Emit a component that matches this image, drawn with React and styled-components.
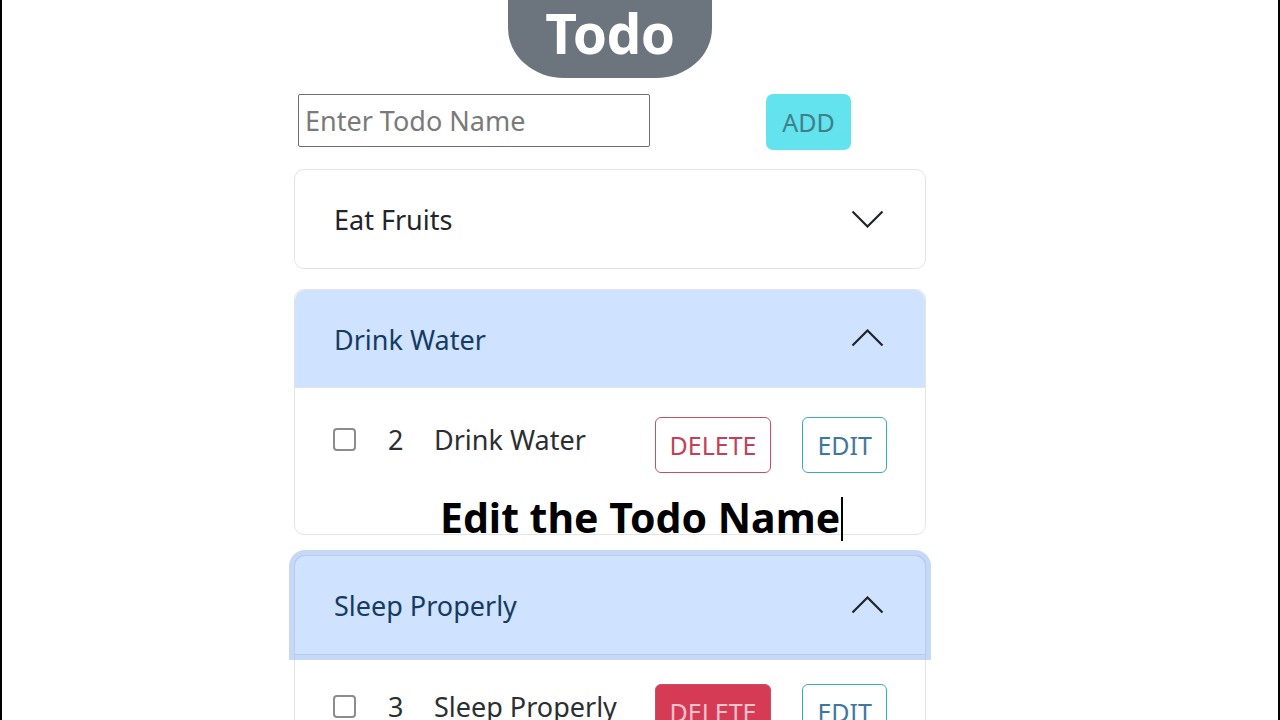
import React from "react";
import styled, { createGlobalStyle } from "styled-components";

const GlobalStyle = createGlobalStyle`
  html, body {
    margin: 0;
    padding: 0;
    background: #ffffff;
  }
  body {
    font-family: "Noto Sans", "Open Sans", sans-serif;
  }
`;

const Page = styled.div`
  position: relative;
  height: 720px;
  overflow: hidden;
  box-sizing: border-box;
  border-left: 2px solid #000;
  border-right: 2px solid #000;
  background: #fff;
`;

const Column = styled.div`
  width: 632px;
  margin-left: 292px;
  display: flex;
  flex-direction: column;
`;

const TitlePill = styled.h1`
  align-self: center;
  margin: -20px 0 0;
  padding: 20px 37px 12px;
  background: #6c757d;
  color: #fff;
  font-size: 55px;
  font-weight: 700;
  line-height: 1.2;
  border-radius: 0 0 56px 56px / 0 0 50px 50px;
  letter-spacing: -0.5px;
`;

const AddRow = styled.div`
  display: flex;
  align-items: flex-start;
  gap: 116px;
  margin: 16px 0 19px 4px;
`;

const NameInput = styled.input`
  width: 352px;
  height: 53px;
  box-sizing: border-box;
  border: 1px solid #6f6f6f;
  border-radius: 2px;
  padding: 0 6px;
  font-family: inherit;
  font-size: 27px;
  color: #212529;
  outline: none;

  &::placeholder {
    color: #7a7a7a;
  }
`;

const AddButton = styled.button`
  width: 85px;
  height: 56px;
  border: none;
  border-radius: 7px;
  background: #63e3ee;
  color: #3f7f8a;
  font-family: inherit;
  font-size: 25px;
  cursor: pointer;
`;

const Item = styled.div`
  border: 1px solid #e1e4e8;
  border-radius: 10px;
  margin-bottom: 20px;
  background: #fff;
`;

const Header = styled.div`
  display: flex;
  align-items: center;
  justify-content: space-between;
  padding: 30px 41px 27px 39px;
  font-size: 27px;
  line-height: 1.5;
  color: ${(p) => (p.$open ? "#163b62" : "#212529")};
  background: ${(p) => (p.$open ? "#cfe2ff" : "#fff")};
  border-radius: ${(p) => (p.$open ? "10px 10px 0 0" : "10px")};
  box-shadow: ${(p) =>
    p.$focus ? "0 0 0 1px #b9cdea, 0 0 0 6px rgba(150, 185, 240, 0.55)" : "none"};
  position: relative;
  z-index: 1;
`;

const Chevron = styled.svg`
  width: 33px;
  height: 18px;
  flex: none;
  margin-top: -3px;
`;

const Body = styled.div`
  padding: 30px 38px 61px 38px;
  border-top: 1px solid #e1e4e8;
`;

const Row = styled.div`
  display: flex;
  align-items: flex-start;
  font-size: 27px;
  line-height: 1.5;
  color: #2b2f33;
`;

const Check = styled.span`
  width: 23px;
  height: 23px;
  box-sizing: border-box;
  border: 2px solid #8c8c8c;
  border-radius: 4px;
  margin-top: 10px;
  flex: none;
`;

const Num = styled.span`
  margin: 2px 32px 0;
  width: 14px;
`;

const Label = styled.span`
  margin-top: 2px;
`;

const Buttons = styled.div`
  margin-left: auto;
  display: flex;
  gap: 31px;
  margin-top: -1px;
`;

const ActionButton = styled.button`
  height: 56px;
  padding: 0 14px;
  border-radius: 6px;
  font-family: inherit;
  font-size: 25px;
  cursor: pointer;
  border: 1.5px solid ${(p) => p.$color};
  color: ${(p) => (p.$filled ? "#f7c4cc" : p.$text)};
  background: ${(p) => (p.$filled ? "#d63b56" : "#fff")};
`;

const Caption = styled.div`
  position: absolute;
  left: 438px;
  top: 497px;
  font-size: 41px;
  font-weight: 700;
  line-height: 1;
  color: #000;
  display: flex;
  z-index: 5;

  &::after {
    content: "";
    display: block;
    width: 2px;
    height: 44px;
    margin-left: 1px;
    background: #000;
  }
`;

const ChevronIcon = ({ up }) => (
  <Chevron viewBox="0 0 33 18">
    <polyline
      points={up ? "1.5,16.5 16.5,1.5 31.5,16.5" : "1.5,1.5 16.5,16.5 31.5,1.5"}
      fill="none"
      stroke="#212529"
      strokeWidth="2.2"
    />
  </Chevron>
);

const todos = [
  { id: 1, name: "Eat Fruits", open: false },
  { id: 2, name: "Drink Water", open: true },
  { id: 3, name: "Sleep Properly", open: true, focus: true, hot: true },
];

const App = () => {
  return (
    <>
      <GlobalStyle />
      <Page>
        <Column>
          <TitlePill>Todo</TitlePill>
          <AddRow>
            <NameInput placeholder="Enter Todo Name" />
            <AddButton>ADD</AddButton>
          </AddRow>
          {todos.map((todo) => (
            <Item key={todo.id}>
              <Header $open={todo.open} $focus={todo.focus}>
                <span>{todo.name}</span>
                <ChevronIcon up={todo.open} />
              </Header>
              {todo.open && (
                <Body>
                  <Row>
                    <Check />
                    <Num>{todo.id}</Num>
                    <Label>{todo.name}</Label>
                    <Buttons>
                      <ActionButton $color="#c7505f" $text="#c4405a" $filled={todo.hot}>
                        DELETE
                      </ActionButton>
                      <ActionButton $color="#3aa9c6" $text="#3f77a0">
                        EDIT
                      </ActionButton>
                    </Buttons>
                  </Row>
                </Body>
              )}
            </Item>
          ))}
        </Column>
        <Caption>Edit the Todo Name</Caption>
      </Page>
    </>
  );
};

export default App;
